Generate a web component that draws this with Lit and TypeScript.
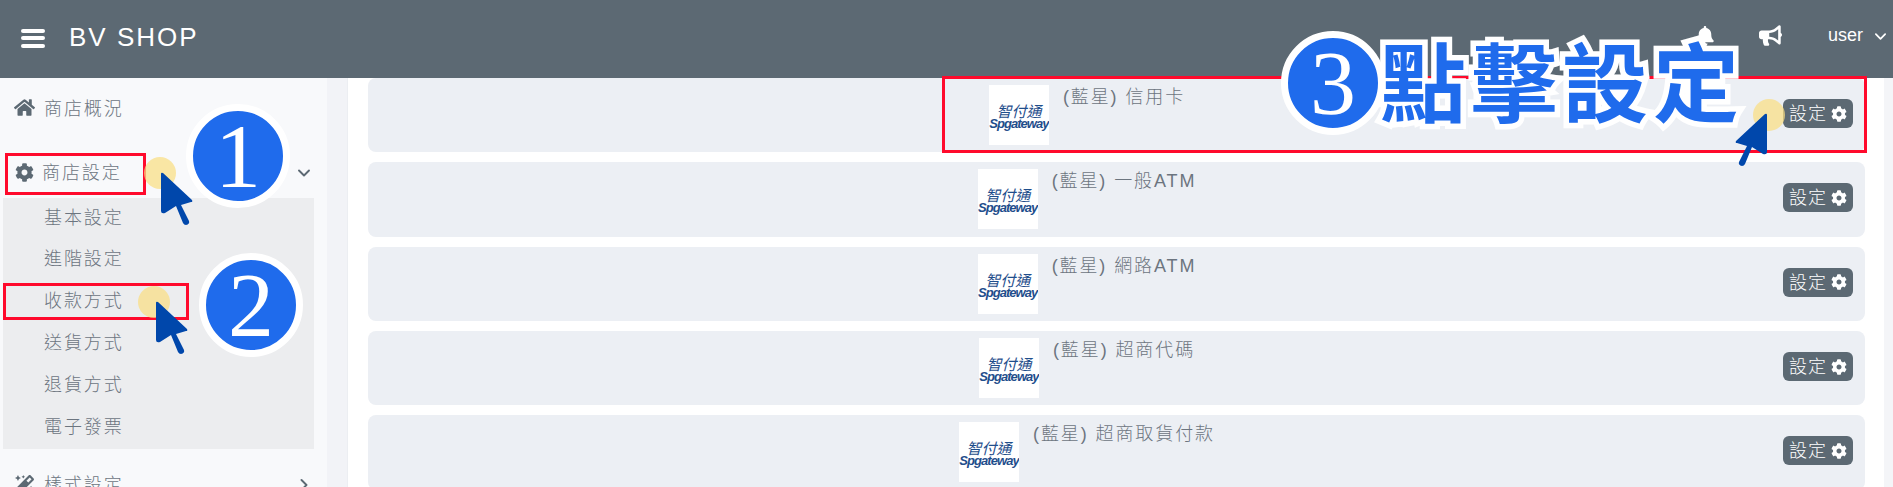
import { LitElement, html, css, svg } from "lit";
import { customElement } from "lit/decorators.js";

const COG = "M487.4 315.7l-42.6-24.6c4.3-23.2 4.3-47 0-70.2l42.6-24.6c4.9-2.8 7.1-8.6 5.5-14-11.1-35.6-30-67.8-54.7-94.6-3.8-4.1-10-5.1-14.8-2.3L380.8 110c-17.9-15.4-38.5-27.3-60.8-35.1V25.8c0-5.6-3.9-10.5-9.4-11.7-36.7-8.2-74.3-7.8-109.2 0-5.5 1.2-9.4 6.1-9.4 11.7V75c-22.2 7.9-42.8 19.8-60.8 35.1L88.7 85.5c-4.9-2.8-11-1.9-14.8 2.3-24.7 26.7-43.6 58.9-54.7 94.6-1.7 5.4.6 11.2 5.5 14L67.3 221c-4.3 23.2-4.3 47 0 70.2l-42.6 24.6c-4.9 2.8-7.1 8.6-5.5 14 11.1 35.6 30 67.8 54.7 94.6 3.8 4.1 10 5.1 14.8 2.3l42.6-24.6c17.9 15.4 38.5 27.3 60.8 35.1v49.2c0 5.6 3.9 10.5 9.4 11.7 36.7 8.2 74.3 7.8 109.2 0 5.5-1.2 9.4-6.1 9.4-11.7v-49.2c22.2-7.9 42.8-19.8 60.8-35.1l42.6 24.6c4.9 2.8 11 1.9 14.8-2.3 24.7-26.7 43.6-58.9 54.7-94.6 1.5-5.5-.7-11.3-5.6-14.1zM256 336c-44.1 0-80-35.9-80-80s35.9-80 80-80 80 35.9 80 80-35.9 80-80 80z";
const HOME = "M280.37 148.26L96 300.11V464a16 16 0 0 0 16 16l112.06-.29a16 16 0 0 0 15.92-16V368a16 16 0 0 1 16-16h64a16 16 0 0 1 16 16v95.64a16 16 0 0 0 16 16.05L464 480a16 16 0 0 0 16-16V300L295.67 148.26a12.19 12.19 0 0 0-15.3 0zM571.6 251.47L488 182.56V44.05a12 12 0 0 0-12-12h-56a12 12 0 0 0-12 12v72.61L318.47 43a48 48 0 0 0-61 0L4.34 251.47a12 12 0 0 0-1.6 16.9l25.5 31A12 12 0 0 0 45.15 301l235.22-193.74a12.19 12.19 0 0 1 15.3 0L530.9 301a12 12 0 0 0 16.9-1.6l25.5-31a12 12 0 0 0-1.7-16.93z";
const HORN = "M576 240c0-23.63-12.95-44.04-32-55.12V32.01C544 23.26 537.02 0 512 0c-7.12 0-14.19 2.38-19.98 7.02l-85.03 68.03C364.28 109.19 310.66 128 256 128H64c-35.35 0-64 28.65-64 64v96c0 35.35 28.65 64 64 64h33.7c-1.39 10.48-2.18 21.14-2.18 32 0 39.77 9.26 77.35 25.56 110.94 5.19 10.69 16.52 17.06 28.4 17.06h74.28c26.05 0 41.69-29.84 25.9-50.56-16.4-21.52-26.15-48.36-26.15-77.44 0-11.11 1.62-21.79 4.41-32H256c54.66 0 108.28 18.81 150.98 52.95l85.03 68.03a32.023 32.023 0 0 0 19.98 7.02c24.92 0 32-22.78 32-32V295.13C563.05 284.04 576 263.63 576 240zm-96 141.42l-33.05-26.44C392.95 311.78 325.12 288 256 288v-96c69.12 0 136.95-23.78 190.95-66.98L480 98.58v282.84z";
const BELL = "M224 512c35.32 0 63.97-28.65 63.97-63.97H160.03C160.03 483.35 188.68 512 224 512zm215.39-149.71c-19.32-20.76-55.47-51.99-55.47-154.29 0-77.7-54.48-139.9-127.94-155.16V32c0-17.67-14.32-32-31.98-32s-31.98 14.33-31.98 32v20.84C118.56 68.1 64.08 130.3 64.08 208c0 102.3-36.15 133.53-55.47 154.29-6 6.45-8.66 14.16-8.61 21.71.11 16.4 12.98 32 32.1 32h383.8c19.12 0 32-15.6 32.1-32 .05-7.55-2.61-15.27-8.61-21.71z";
const MAGIC = "M224 96l16-32 32-16-32-16-16-32-16 32-32 16 32 16 16 32zM80 160l26.66-53.33L160 80l-53.34-26.67L80 0 53.34 53.33 0 80l53.34 26.67L80 160zm352 128l-26.66 53.33L352 368l53.34 26.67L432 448l26.66-53.33L512 368l-53.34-26.67L432 288zm70.62-193.77L417.77 9.38C411.53 3.12 403.34 0 395.15 0c-8.19 0-16.38 3.12-22.63 9.38L9.38 372.52c-12.5 12.5-12.5 32.76 0 45.25l84.85 84.85c6.25 6.25 14.44 9.37 22.62 9.37 8.19 0 16.38-3.12 22.63-9.37l363.14-363.15c12.5-12.48 12.5-32.75 0-45.24zM359.45 203.46l-50.91-50.91 86.6-86.6 50.91 50.91-86.6 86.6z";

const icon = (d: string, vb: number, cls: string) =>
  html`<svg class=${cls} viewBox="0 0 ${vb} 512" fill="currentColor">${svg`<path d=${d}></path>`}</svg>`;
const chevDown = html`<svg class="chev" viewBox="0 0 14 14" fill="none" stroke="currentColor" stroke-width="1.9" stroke-linecap="round" stroke-linejoin="round"><path d="M2 4.5 7 9.5 12 4.5"></path></svg>`;
const chevRight = html`<svg class="chev" viewBox="0 0 14 14" fill="none" stroke="currentColor" stroke-width="1.9" stroke-linecap="round" stroke-linejoin="round"><path d="M4.5 2 9.5 7 4.5 12"></path></svg>`;

const ROWS = ["信用卡", "一般ATM", "網路ATM", "超商代碼", "超商取貨付款"];
const SUBS = ["基本設定", "進階設定", "收款方式", "送貨方式", "退貨方式", "電子發票"];

@customElement("app-root")
export class AppRoot extends LitElement {
  static styles = css`
    :host { display: block; position: relative; width: 1893px; height: 487px; overflow: hidden; background: #fff;
      font-family: "Liberation Sans", "Noto Sans CJK TC", sans-serif; color: #6c757f; }
    .top { height: 78px; background: #5c6973; color: #fff; display: flex; align-items: center; padding: 0 6px 0 21px; }
    .burger { width: 24px; height: 19px; display: flex; flex-direction: column; justify-content: space-between; margin-top: -2px; }
    .burger i { display: block; height: 4px; border-radius: 2px; background: #fff; }
    .brand { margin-left: 24px; font-size: 26px; letter-spacing: 2px; margin-top: -3px; }
    .spacer { flex: 1; }
    .bell { width: 18px; height: 20px; margin-right: 45px; margin-top: -6px; }
    .horn { width: 23px; height: 21px; margin-right: 46px; margin-top: -7px; }
    .user { font-size: 18px; margin-top: -7px; }
    .top .chev { margin-left: 11px; margin-top: -5px; width: 13px; height: 13px; }
    .body { display: flex; height: 409px; }
    .side { width: 327px; flex: none; background: #f8f9fb; padding-top: 10px; box-sizing: border-box; overflow: hidden; }
    .strip { width: 20px; flex: none; background: #f2f3f7; border-right: 1px solid #eceef2; }
    .item { height: 40px; display: flex; align-items: center; padding: 0 14px; font-size: 18px; letter-spacing: 1.9px; font-weight: 300; }
    .item + .item { margin-top: 25px; }
    .item .tx { margin-top: -4px; }
    .item:first-child .tx { margin-top: -2px; }
    .item .ic { width: 21px; height: 19px; color: #5c6973; margin-right: 9px; flex: none; margin-top: -1px; }
    .item.gear .ic { width: 19px; margin-left: 1px; margin-right: 8px; }
    .item .chev { width: 14px; height: 14px; margin-left: auto; color: #5c6973; margin-right: 2px; }
    .sub { margin: 5px 13px 16px 3px; background: #ecedef; }
    .sub div { height: 41.83px; box-sizing: border-box; padding: 0 0 6.5px 41px; display: flex; align-items: center; font-size: 18px; letter-spacing: 1.9px; font-weight: 300; }
    .main { flex: 1; min-width: 0; padding: 0 19px 0 20px; display: flex; flex-direction: column; gap: 10px; overflow: hidden; }
    .row { flex: none; height: 74.33px; box-sizing: border-box; background: #eceff4; border-radius: 8px; display: flex; align-items: center; padding: 0 12px 0 23px; }
    .left { flex: 1; display: flex; justify-content: center; align-items: flex-start; gap: 14px; }
    .logo { width: 60px; height: 60px; background: #fff; flex: none; display: flex; flex-direction: column; align-items: center; justify-content: flex-end; padding-bottom: 15px; box-sizing: border-box; color: #1f4e8c; font-style: italic; font-weight: 700; white-space: nowrap; overflow: hidden; }
    .logo b { font-family: "Noto Sans CJK TC", sans-serif; font-size: 15px; line-height: 15px; letter-spacing: 0; font-weight: 400; }
    .logo span { font-size: 13px; line-height: 12px; letter-spacing: -.95px; }
    .label { font-size: 18px; letter-spacing: 1.9px; font-weight: 300; line-height: 24px; margin-top: 0; white-space: nowrap; }
    .btn { flex: none; width: 70px; height: 29px; margin-top: -3px; background: #5c6973; color: #fff; border-radius: 6px; display: flex; align-items: center; justify-content: center; gap: 4px; font-size: 18px; letter-spacing: 1px; font-weight: 300; }
    .btn span { margin-top: -3px; }
    .btn svg { width: 16px; height: 16px; }
    .scroll { width: 9px; flex: none; background: #f4f5f8; }
    .a { position: absolute; }
    .box { border: 3px solid #ff0a2c; box-sizing: border-box; }
    .dot { width: 32px; height: 32px; border-radius: 50%; background: rgba(250, 222, 130, .72); }
    .num { width: 104px; height: 104px; box-sizing: border-box; border: 7px solid #fff; border-radius: 50%; background: #1f6bec; color: #fff; display: flex; align-items: center; justify-content: center; font-family: "Liberation Serif", serif; font-size: 92px; line-height: 1; }
    .big { font-family: "Noto Sans CJK TC", sans-serif; font-weight: 700; font-size: 86px; letter-spacing: 5px; line-height: 100px; color: #1f6bec; -webkit-text-stroke: 11px #fff; paint-order: stroke fill; white-space: nowrap; }
    .cursor { width: 44px; height: 60px; overflow: visible; }
  `;

  private cursor(x: number, y: number, flip = false) {
    return html`<svg class="a cursor" style="left:${x}px;top:${y}px;transform-origin:0 0;transform:scaleX(${flip ? -1 : 1})" viewBox="0 0 44 60">
      <path d="M0 2Q0 0 2 1L31 28Q32 30 30 30L20 33 28 49Q29 52 25 53 23 53 22 51L15 34 4 41Q0 42 0 39Z" fill="#0047ab"></path>
    </svg>`;
  }

  render() {
    return html`
      <div class="top">
        <div class="burger"><i></i><i></i><i></i></div>
        <div class="brand">BV SHOP</div>
        <div class="spacer"></div>
        ${icon(BELL, 448, "bell")}
        ${icon(HORN, 576, "horn")}
        <div class="user">user</div>
        ${chevDown}
      </div>
      <div class="body">
        <aside class="side">
          <div class="item">${icon(HOME, 576, "ic")}<span class="tx">商店概況</span></div>
          <div class="item gear">${icon(COG, 512, "ic")}<span class="tx">商店設定</span>${chevDown}</div>
          <div class="sub">${SUBS.map((s) => html`<div>${s}</div>`)}</div>
          <div class="item">${icon(MAGIC, 512, "ic")}<span class="tx">樣式設定</span>${chevRight}</div>
        </aside>
        <div class="strip"></div>
        <main class="main">
          ${ROWS.map((r) => html`
            <div class="row">
              <div class="left">
                <div class="logo"><b>智付通</b><span>Spgateway</span></div>
                <div class="label">(藍星) ${r}</div>
              </div>
              <div class="btn"><span>設定</span>${icon(COG, 512, "")}</div>
            </div>`)}
        </main>
        <div class="scroll"></div>
      </div>

      <div class="a box" style="left:5px;top:153px;width:141px;height:42px"></div>
      <div class="a box" style="left:3px;top:283px;width:186px;height:37px"></div>
      <div class="a box" style="left:942px;top:76px;width:925px;height:77px"></div>

      <div class="a dot" style="left:144px;top:157px"></div>
      <div class="a dot" style="left:138px;top:286px"></div>
      <div class="a dot" style="left:1753px;top:99px"></div>
      ${this.cursor(161, 172)}
      ${this.cursor(156, 301)}
      ${this.cursor(1767, 113, true)}

      <div class="a num" style="left:186px;top:104px">1</div>
      <div class="a num" style="left:199px;top:253px">2</div>
      <div class="a num" style="left:1281px;top:31px">3</div>
      <div class="a big" style="left:1380px;top:29px">點擊設定</div>
    `;
  }
}
